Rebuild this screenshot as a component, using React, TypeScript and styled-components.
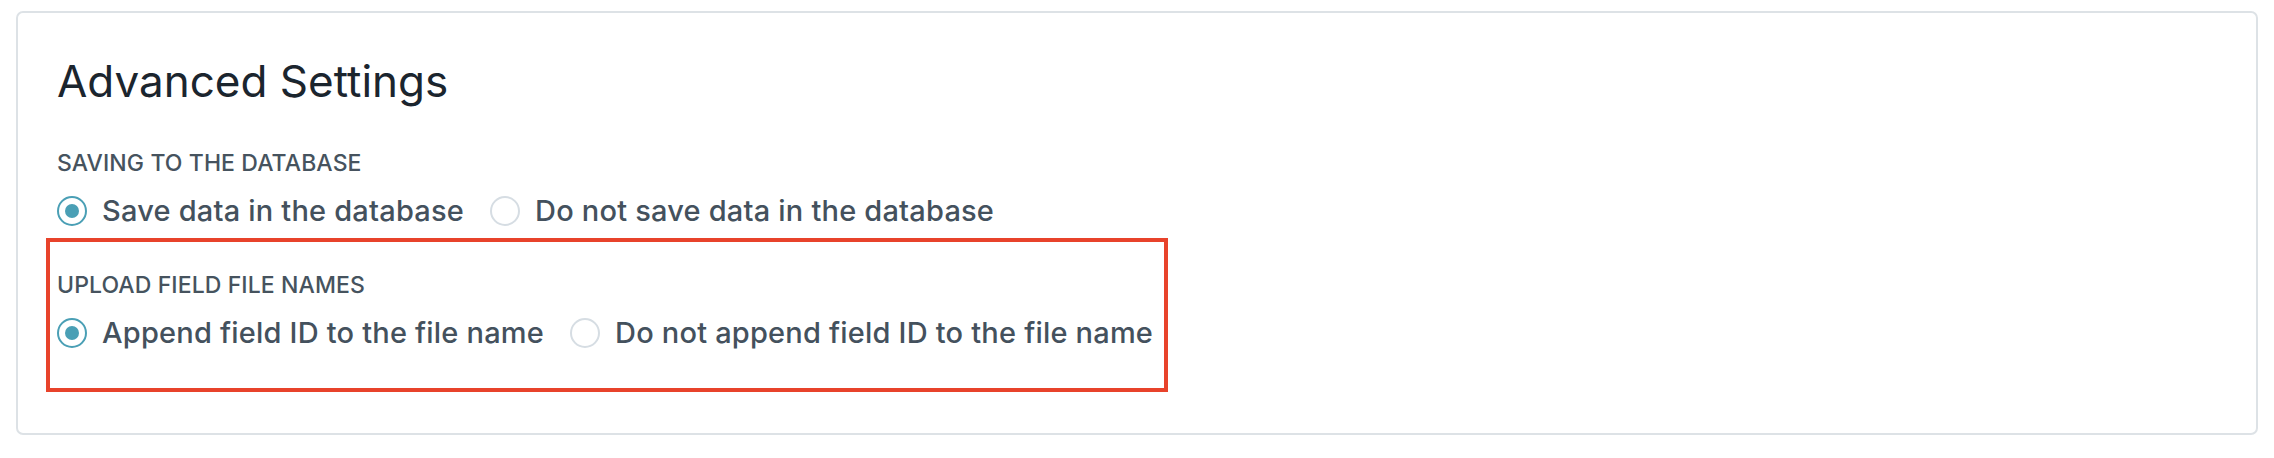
import { useState } from "react";
import styled, { createGlobalStyle } from "styled-components";

const GlobalStyle = createGlobalStyle`
  html, body {
    margin: 0;
    padding: 0;
    background: #ffffff;
  }
  body {
    font-family: Inter, "Liberation Sans", sans-serif;
  }
`;

type Option = { value: string; label: string };

const savingOptions: Option[] = [
  { value: "save", label: "Save data in the database" },
  { value: "nosave", label: "Do not save data in the database" },
];

const uploadOptions: Option[] = [
  { value: "append", label: "Append field ID to the file name" },
  { value: "noappend", label: "Do not append field ID to the file name" },
];

const RadioGroup = ({
  name,
  options,
  value,
  onChange,
}: {
  name: string;
  options: Option[];
  value: string;
  onChange: (v: string) => void;
}) => (
  <Row>
    {options.map((opt) => (
      <OptionLabel key={opt.value}>
        <RadioInput
          type="radio"
          name={name}
          checked={value === opt.value}
          onChange={() => onChange(opt.value)}
        />
        <OptionText>{opt.label}</OptionText>
      </OptionLabel>
    ))}
  </Row>
);

const App = () => {
  const [saving, setSaving] = useState("save");
  const [upload, setUpload] = useState("append");

  return (
    <Page>
      <GlobalStyle />
      <Card>
        <Title>Advanced Settings</Title>

        <Section>
          <SectionLabel>Saving to the database</SectionLabel>
          <RadioGroup
            name="saving"
            options={savingOptions}
            value={saving}
            onChange={setSaving}
          />
        </Section>

        <Highlight>
          <SectionLabel>Upload field file names</SectionLabel>
          <RadioGroup
            name="upload"
            options={uploadOptions}
            value={upload}
            onChange={setUpload}
          />
        </Highlight>
      </Card>
    </Page>
  );
};

const Page = styled.div`
  padding: 11px 16px 0 16px;
`;

const Card = styled.div`
  border: 2px solid #dde2e6;
  border-radius: 7px;
  background: #ffffff;
  padding: 46px 39px 41px 39px;
  display: flex;
  flex-direction: column;
  align-items: flex-start;
`;

const Title = styled.h2`
  margin: 0;
  font-size: 44px;
  line-height: 44px;
  font-weight: 400;
  color: #1b252e;
`;

const Section = styled.div`
  display: flex;
  flex-direction: column;
  margin-top: 49px;
`;

const Highlight = styled.div`
  display: flex;
  flex-direction: column;
  margin: 12px 0 0 -11px;
  padding: 32px 11px 40px 7px;
  border: 4px solid #e8432b;
`;

const SectionLabel = styled.div`
  font-size: 23px;
  line-height: 23px;
  font-weight: 500;
  letter-spacing: 0.1px;
  text-transform: uppercase;
  color: #46535e;
  margin-bottom: 21px;
`;

const Row = styled.div`
  display: flex;
  align-items: center;
  gap: 26px;
`;

const OptionLabel = styled.label`
  display: flex;
  align-items: center;
  gap: 15px;
  cursor: pointer;
`;

const RadioInput = styled.input`
  appearance: none;
  margin: 0;
  width: 30px;
  height: 30px;
  border-radius: 50%;
  border: 2px solid #d6dde3;
  background: #ffffff;
  display: grid;
  place-items: center;
  flex-shrink: 0;

  &::after {
    content: "";
    width: 14px;
    height: 14px;
    border-radius: 50%;
    background: transparent;
  }

  &:checked {
    border-color: #4a9fb5;
  }

  &:checked::after {
    background: #4a9fb5;
  }
`;

const OptionText = styled.span`
  font-size: 29px;
  line-height: 30px;
  font-weight: 500;
  letter-spacing: 0.2px;
  color: #44515d;
  white-space: nowrap;
`;

export default App;
